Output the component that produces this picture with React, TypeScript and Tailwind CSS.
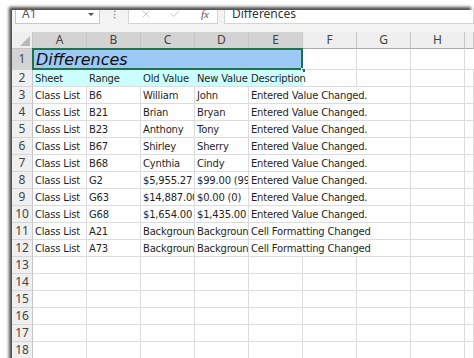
import React from 'react';
import { X, Check, EllipsisVertical } from 'lucide-react';

const data = [
  ['3', 'Class List', 'B6', 'William', 'John', 'Entered Value Changed.'],
  ['4', 'Class List', 'B21', 'Brian', 'Bryan', 'Entered Value Changed.'],
  ['5', 'Class List', 'B23', 'Anthony', 'Tony', 'Entered Value Changed.'],
  ['6', 'Class List', 'B67', 'Shirley', 'Sherry', 'Entered Value Changed.'],
  ['7', 'Class List', 'B68', 'Cynthia', 'Cindy', 'Entered Value Changed.'],
  ['8', 'Class List', 'G2', '$5,955.27', '$99.00 (99.00)', 'Entered Value Changed.'],
  ['9', 'Class List', 'G63', '$14,887.00', '$0.00 (0)', 'Entered Value Changed.'],
  ['10', 'Class List', 'G68', '$1,654.00', '$1,435.00', 'Entered Value Changed.'],
  ['11', 'Class List', 'A21', 'Background', 'Background', 'Cell Formatting Changed'],
  ['12', 'Class List', 'A73', 'Background', 'Background', 'Cell Formatting Changed'],
];

const emptyRows = ['13', '14', '15', '16', '17', '18'];

const RowHead = ({ n, selected = false, tall = false }: { n: string; selected?: boolean; tall?: boolean }) => (
  <div
    className={`${tall ? 'h-[21px]' : 'h-[17px]'} w-[21px] shrink-0 flex items-center justify-center border-r border-b border-r-[#c6c6c6] border-b-[#d5d5d5] text-[12px] text-[#444] font-['Noto_Sans',sans-serif] ${selected ? 'bg-[#d3d3d3]' : 'bg-[#efefef]'}`}
  >
    {n}
  </div>
);

const Cell = ({ text = '', w = 'w-[54px]', clip = true }: { text?: string; w?: string; clip?: boolean }) => (
  <div
    className={`${w} h-[17px] shrink-0 flex items-center border-r border-b border-[#dcdcdc] px-[2px] whitespace-nowrap text-[10px] tracking-[-0.2px] text-[#1f1f1f] font-['DejaVu_Sans',sans-serif] ${clip ? 'overflow-hidden' : 'overflow-visible'}`}
  >
    {text}
  </div>
);

export default function App() {
  return (
    <div className="w-[474px] h-[358px] bg-white overflow-hidden pl-[12px] pt-[10px]">
      <div className="w-[462px] h-[360px] bg-[#f3f3f3] shadow-[-3px_-3px_3px_rgba(0,0,0,0.7)] overflow-hidden">
        {/* formula bar */}
        <div className="-mt-[6px] h-[20px] flex items-stretch">
          <div className="ml-[3px] w-[85px] bg-white border border-[#c6c6c6] flex items-center justify-between pl-[6px] pr-[5px]">
            <span className="text-[12px] text-[#555] font-['Noto_Sans',sans-serif]">A1</span>
            <span className="w-0 h-0 border-l-[3px] border-r-[3px] border-t-[3px] border-l-transparent border-r-transparent border-t-[#555]" />
          </div>
          <div className="w-[28px] flex items-center justify-center text-[#9a9a9a]">
            <EllipsisVertical size={11} strokeWidth={2} />
          </div>
          <div className="w-[90px] bg-white border border-[#d4d4d4] flex items-center pl-[11px] pr-[8px]">
            <X size={12} strokeWidth={1.5} className="text-[#b8b8b8]" />
            <Check size={12} strokeWidth={1.5} className="text-[#b8b8b8] ml-[17px]" />
            <span className="ml-auto text-[11px] italic text-[#555] font-['Liberation_Serif',serif]">fx</span>
          </div>
          <div className="ml-[6px] flex-1 bg-white border border-[#d4d4d4] flex items-center pl-[7px]">
            <span className="text-[12px] text-[#333] font-['Noto_Sans',sans-serif]">Differences</span>
          </div>
        </div>
        <div className="h-[8px]" />

        {/* column headers */}
        <div className="flex h-[17px]">
          <div className="w-[21px] shrink-0 bg-[#efefef] border-r border-b border-[#c6c6c6] flex items-end justify-end p-[2px]">
            <span className="w-0 h-0 border-t-[10px] border-r-[10px] border-t-transparent border-r-[#b9b9b9]" />
          </div>
          {['A', 'B', 'C', 'D', 'E', 'F', 'G', 'H', 'I'].map((c, i) => (
            <div
              key={c}
              className={`${c === 'I' ? 'w-[9px]' : 'w-[54px]'} shrink-0 flex items-center justify-center border-r border-b border-r-[#c6c6c6] border-b-[#ababab] text-[12px] text-[#444] font-['Noto_Sans',sans-serif] ${i < 5 ? 'bg-[#d3d3d3]' : 'bg-[#efefef]'}`}
            >
              {c === 'I' ? '' : c}
            </div>
          ))}
        </div>

        {/* row 1 */}
        <div className="flex">
          <RowHead n="1" selected tall />
          <div className="relative w-[270px] h-[21px] shrink-0 bg-[#9cc9f5] flex items-center pl-[3px]">
            <span className="text-[16px] italic text-[#111] font-['DejaVu_Sans',sans-serif]">Differences</span>
            <div className="absolute -left-[1px] -top-[1px] right-0 bottom-0 border-2 border-[#217346]" />
            <div className="absolute -right-[3px] -bottom-[3px] w-[5px] h-[5px] bg-[#217346] border border-white" />
          </div>
          <div className="w-[54px] h-[21px] shrink-0 border-r border-b border-[#dcdcdc] bg-white" />
          <div className="w-[54px] h-[21px] shrink-0 border-r border-b border-[#dcdcdc] bg-white" />
          <div className="w-[54px] h-[21px] shrink-0 border-r border-b border-[#dcdcdc] bg-white" />
          <div className="w-[9px] h-[21px] shrink-0 border-b border-[#dcdcdc] bg-white" />
        </div>

        {/* row 2 */}
        <div className="flex bg-white">
          <RowHead n="2" />
          {['Sheet', 'Range', 'Old Value', 'New Value'].map((t) => (
            <div key={t} className="w-[54px] h-[17px] shrink-0 flex items-center border-b border-[#dcdcdc] bg-[#ccffff] px-[2px] whitespace-nowrap overflow-hidden text-[10px] tracking-[-0.2px] text-[#1f1f1f] font-['DejaVu_Sans',sans-serif]">
              {t}
            </div>
          ))}
          <div className="relative z-10 w-[54px] h-[17px] shrink-0 flex items-center border-b border-[#dcdcdc] bg-[#ccffff] px-[2px] whitespace-nowrap text-[10px] tracking-[-0.2px] text-[#1f1f1f] font-['DejaVu_Sans',sans-serif]">
            Description
          </div>
          <Cell />
          <Cell />
          <Cell />
          <Cell w="w-[9px]" />
        </div>

        {/* data rows */}
        {data.map(([n, a, b, c, d, e]) => (
          <div key={n} className="flex bg-white">
            <RowHead n={n} />
            <Cell text={a} />
            <Cell text={b} />
            <Cell text={c} />
            <Cell text={d} />
            <Cell text={e} w="w-[162px]" clip={false} />
            <Cell />
            <Cell w="w-[9px]" />
          </div>
        ))}

        {emptyRows.map((n) => (
          <div key={n} className="flex bg-white">
            <RowHead n={n} />
            <Cell />
            <Cell />
            <Cell />
            <Cell />
            <Cell />
            <Cell />
            <Cell />
            <Cell />
            <Cell w="w-[9px]" />
          </div>
        ))}
      </div>
    </div>
  );
}
